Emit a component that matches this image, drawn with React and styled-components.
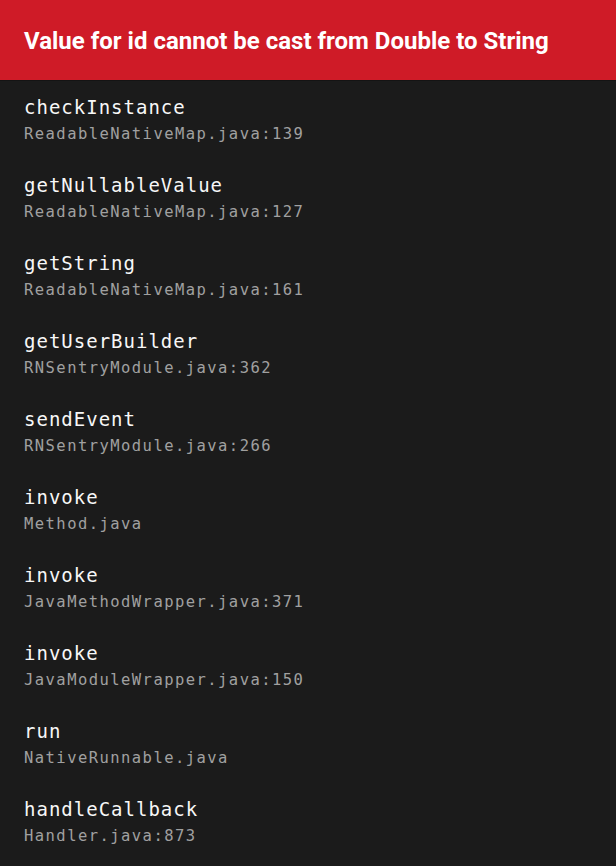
import React from "react";
import styled, { createGlobalStyle } from "styled-components";

const Global = createGlobalStyle`
  html, body { margin: 0; padding: 0; background: #1b1b1b; }
  body { width: 616px; height: 866px; overflow: hidden; }
`;

const Screen = styled.div`
  width: 616px;
  height: 866px;
  background: #1b1b1b;
  display: flex;
  flex-direction: column;
`;

const Header = styled.header`
  height: 80px;
  box-sizing: border-box;
  background: #cf1b27;
  display: flex;
  align-items: center;
  padding: 2px 24px 0;
  box-shadow: 0 1px 0 #141414;
`;

const Title = styled.h1`
  margin: 0;
  color: #ffffff;
  font-family: Roboto, "Liberation Sans", sans-serif;
  font-weight: 700;
  font-size: 24px;
  line-height: 28px;
  white-space: nowrap;
`;

const List = styled.ul`
  list-style: none;
  margin: 0;
  padding: 15px 24px 0;
  display: flex;
  flex-direction: column;
  gap: 25px;
`;

const Frame = styled.li`
  display: flex;
  flex-direction: column;
  font-family: "DejaVu Sans Mono", "Liberation Mono", monospace;
`;

const Method = styled.span`
  color: #f7f7f7;
  font-size: 19px;
  line-height: 25px;
  letter-spacing: 1px;
  white-space: nowrap;
`;

const File = styled.span`
  color: #a0a0a0;
  font-size: 15.5px;
  line-height: 28px;
  letter-spacing: 1.45px;
  white-space: nowrap;
`;

const frames = [
  ["checkInstance", "ReadableNativeMap.java:139"],
  ["getNullableValue", "ReadableNativeMap.java:127"],
  ["getString", "ReadableNativeMap.java:161"],
  ["getUserBuilder", "RNSentryModule.java:362"],
  ["sendEvent", "RNSentryModule.java:266"],
  ["invoke", "Method.java"],
  ["invoke", "JavaMethodWrapper.java:371"],
  ["invoke", "JavaModuleWrapper.java:150"],
  ["run", "NativeRunnable.java"],
  ["handleCallback", "Handler.java:873"],
];

export default function App() {
  return (
    <Screen>
      <Global />
      <Header>
        <Title>Value for id cannot be cast from Double to String</Title>
      </Header>
      <List>
        {frames.map(([m, f], i) => (
          <Frame key={i}>
            <Method>{m}</Method>
            <File>{f}</File>
          </Frame>
        ))}
      </List>
    </Screen>
  );
}
